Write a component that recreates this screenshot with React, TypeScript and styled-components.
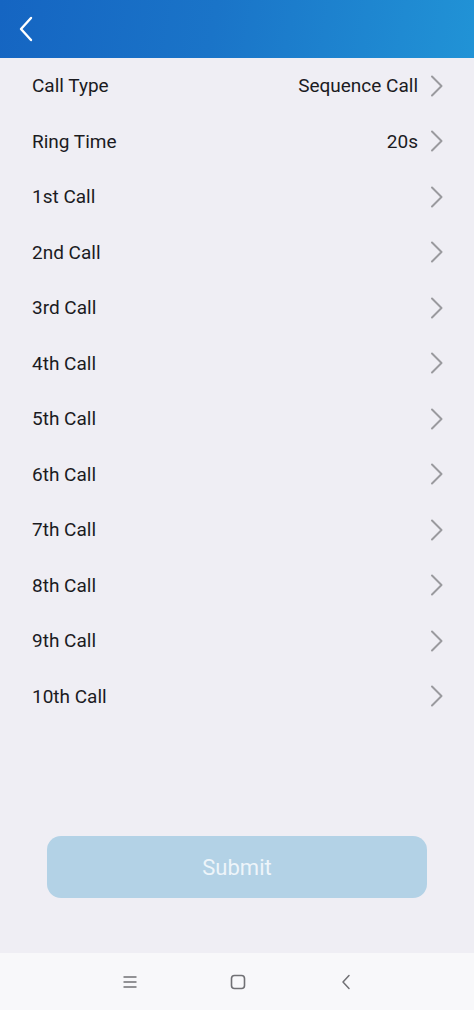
import styled, { createGlobalStyle } from "styled-components";

const GlobalStyle = createGlobalStyle`
  html, body {
    margin: 0;
    padding: 0;
    background: #efeef4;
  }
  body {
    font-family: Roboto, "Noto Sans", "Liberation Sans", sans-serif;
  }
`;

const Screen = styled.div`
  width: 474px;
  height: 1010px;
  display: flex;
  flex-direction: column;
  background: #efeef4;
  overflow: hidden;
`;

const Header = styled.header`
  height: 58px;
  flex-shrink: 0;
  display: flex;
  align-items: center;
  padding-left: 16px;
  background: linear-gradient(100deg, #1565c2 0%, #1a74c8 45%, #2193d6 100%);
`;

const BackButton = styled.button`
  border: 0;
  background: none;
  padding: 0;
  width: 20px;
  height: 26px;
  display: flex;
  align-items: center;
  justify-content: center;
  cursor: pointer;
`;

const List = styled.ul`
  list-style: none;
  margin: 0;
  padding: 0;
`;

const Row = styled.li`
  height: 55.5px;
  display: flex;
  align-items: center;
  padding: 0 30px 0 32px;
  color: #1b1b1f;
  font-size: 19px;
`;

const Label = styled.span`
  flex: 1;
`;

const Value = styled.span`
  margin-right: 12px;
`;

const Spacer = styled.div`
  flex: 1;
`;

const SubmitWrap = styled.div`
  padding: 0 47px 55px;
`;

const SubmitButton = styled.button`
  width: 100%;
  height: 62px;
  border: 0;
  border-radius: 14px;
  background: #b3d2e6;
  color: #eef5fa;
  font-family: Roboto, "Noto Sans", "Liberation Sans", sans-serif;
  font-size: 22px;
`;

const NavBar = styled.nav`
  height: 57px;
  flex-shrink: 0;
  background: #f8f8fa;
  display: grid;
  grid-template-columns: repeat(3, 108px);
  justify-content: start;
  padding-left: 75.5px;
  align-items: center;
`;

const NavIcon = styled.div`
  display: flex;
  justify-content: center;
  align-items: center;
`;

const Chevron = () => (
  <svg width="14" height="22" viewBox="0 0 14 22" fill="none">
    <path d="M2 1.5 L11.5 11 L2 20.5" stroke="#9a9a9e" strokeWidth="2" strokeLinecap="round" strokeLinejoin="round" />
  </svg>
);

const rows: { label: string; value?: string }[] = [
  { label: "Call Type", value: "Sequence Call" },
  { label: "Ring Time", value: "20s" },
  { label: "1st Call" },
  { label: "2nd Call" },
  { label: "3rd Call" },
  { label: "4th Call" },
  { label: "5th Call" },
  { label: "6th Call" },
  { label: "7th Call" },
  { label: "8th Call" },
  { label: "9th Call" },
  { label: "10th Call" },
];

export default function App() {
  return (
    <>
      <GlobalStyle />
      <Screen>
        <Header>
          <BackButton aria-label="back">
            <svg width="16" height="26" viewBox="0 0 16 26" fill="none">
              <path d="M13 2 L3 13 L13 24" stroke="#ffffff" strokeWidth="2.4" strokeLinecap="round" strokeLinejoin="round" />
            </svg>
          </BackButton>
        </Header>
        <List>
          {rows.map((r) => (
            <Row key={r.label}>
              <Label>{r.label}</Label>
              {r.value && <Value>{r.value}</Value>}
              <Chevron />
            </Row>
          ))}
        </List>
        <Spacer />
        <SubmitWrap>
          <SubmitButton>Submit</SubmitButton>
        </SubmitWrap>
        <NavBar>
          <NavIcon>
            <svg width="16" height="14" viewBox="0 0 16 14" fill="none">
              <path d="M1.5 2 H14.5 M1.5 7 H14.5 M1.5 12 H14.5" stroke="#707074" strokeWidth="1.3" />
            </svg>
          </NavIcon>
          <NavIcon>
            <svg width="16" height="16" viewBox="0 0 16 16" fill="none">
              <rect x="1.5" y="1.5" width="13" height="13" rx="3" stroke="#707074" strokeWidth="1.6" />
            </svg>
          </NavIcon>
          <NavIcon>
            <svg width="10" height="16" viewBox="0 0 10 16" fill="none">
              <path d="M8 1.5 L2 8 L8 14.5" stroke="#707074" strokeWidth="1.5" strokeLinecap="round" strokeLinejoin="round" />
            </svg>
          </NavIcon>
        </NavBar>
      </Screen>
    </>
  );
}
